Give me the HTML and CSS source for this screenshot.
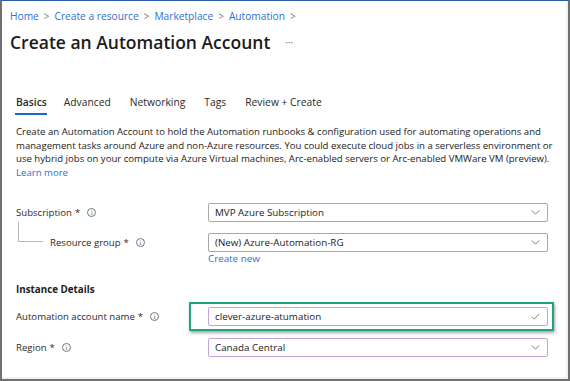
FILE: index.html
```html
<!DOCTYPE html>
<html lang="en">
<head>
<meta charset="utf-8">
<title>Create an Automation Account</title>
<link rel="stylesheet" href="styles.css">
</head>
<body>
<div class="frame">
  <div class="header">
    <nav class="crumbs">
      <a>Home</a><span class="sep">&gt;</span><a>Create a resource</a><span class="sep">&gt;</span><a>Marketplace</a><span class="sep">&gt;</span><a>Automation</a><span class="sep">&gt;</span>
    </nav>
    <div class="title-row">
      <h1 class="title">Create an Automation Account</h1>
      <span class="more">···</span>
    </div>
  </div>
  <div class="content">
    <div class="tabs">
      <span class="tab active">Basics</span>
      <span class="tab">Advanced</span>
      <span class="tab">Networking</span>
      <span class="tab">Tags</span>
      <span class="tab">Review + Create</span>
    </div>
    <p class="desc">Create an Automation Account to hold the Automation runbooks &amp; configuration used for automating operations and management tasks around Azure and non-Azure resources. You could execute cloud jobs in a serverless environment or use hybrid jobs on your compute via Azure Virtual machines, Arc-enabled servers or Arc-enabled VMWare VM (preview).<br><a class="link">Learn more</a></p>

    <div class="form">
      <div class="row r-sub">
        <label class="label">Subscription <span class="req">*</span> <span class="info">i</span></label>
        <div class="field select"><span>MVP Azure Subscription</span><svg class="chev" viewBox="0 0 10 6"><path d="M0.5 0.5 L5 5 L9.5 0.5" fill="none" stroke="#555" stroke-width="0.9"/></svg></div>
      </div>
      <div class="row r-rg">
        <label class="label nested"><span class="tree"></span>Resource group <span class="req">*</span> <span class="info">i</span></label>
        <div class="field-col">
          <div class="field select"><span>(New) Azure-Automation-RG</span><svg class="chev" viewBox="0 0 10 6"><path d="M0.5 0.5 L5 5 L9.5 0.5" fill="none" stroke="#555" stroke-width="0.9"/></svg></div>
          <a class="link create">Create new</a>
        </div>
      </div>
      <h2 class="section">Instance Details</h2>
      <div class="row r-name">
        <label class="label">Automation account name <span class="req">*</span> <span class="info">i</span></label>
        <div class="field input focus"><span>clever-azure-atumation</span><svg class="check" viewBox="0 0 10 8"><path d="M0.8 4.2 L3.6 7 L9.2 1" fill="none" stroke="#9c7d5c" stroke-width="1.1"/></svg>
          <div class="highlight"></div>
        </div>
      </div>
      <div class="row r-region">
        <label class="label">Region <span class="req">*</span> <span class="info">i</span></label>
        <div class="field select focus"><span>Canada Central</span><svg class="chev" viewBox="0 0 10 6"><path d="M0.5 0.5 L5 5 L9.5 0.5" fill="none" stroke="#555" stroke-width="0.9"/></svg></div>
      </div>
    </div>
  </div>
</div>
</body>
</html>
```
FILE: styles.css
```css
* { box-sizing: border-box; }
html, body { margin: 0; padding: 0; background: #fff; }
body { font-family: "Open Sans", "Noto Sans", sans-serif; color: #242424; }

.frame {
  width: 570px;
  height: 381px;
  border-top: 1px solid #2a5caa;
  border-left: 2px solid #707070;
  border-right: 2px solid #707070;
  border-bottom: 2px solid #707070;
  box-shadow: inset -2px -2px 0 #f1f1f1;
  overflow: hidden;
  position: relative;
}

.header { padding: 7px 0 0 8px; }
.crumbs { font-size: 10.2px; line-height: 16px; height: 16px; white-space: nowrap; }
.crumbs a { color: #2f6fd0; }
.crumbs .sep { color: #777; margin: 0 5px; font-size: 10px; }

.title-row { display: flex; align-items: center; margin-top: 5px; height: 26px; }
.title { margin: 0; font-size: 17.5px; font-weight: 600; line-height: 26px; color: #1b1b1b; }
.more { margin-left: 15px; color: #666; font-size: 10px; }

.content { padding: 0 0 0 14px; }

.tabs { display: flex; margin-top: 38px; height: 23px; }
.tab { font-size: 10.3px; line-height: 18px; margin-right: 19px; color: #2a2a2a; height: 23px; position: relative; }
.tab.active { font-weight: 600; margin-right: 17px; }
.tab.active::after {
  content: "";
  position: absolute;
  left: -1px; right: 0;
  bottom: 1px;
  height: 2px;
  background: #1f66c8;
}

.desc { margin: 9px 0 0 0; font-size: 9.6px; line-height: 13.6px; color: #222; width: 545px; }
.link { color: #2f6fd0; }

.form { margin-top: 24px; }
.row { display: grid; grid-template-columns: 192px 340px; align-items: start; }
.label { font-size: 9.6px; line-height: 19px; color: #2a2a2a; display: flex; align-items: center; white-space: nowrap; }
.req { margin-left: 3px; }
.info {
  display: inline-flex; align-items: center; justify-content: center;
  width: 9px; height: 9px; border: 0.8px solid #777; border-radius: 50%;
  font-size: 6.5px; line-height: 1; color: #666; margin-left: 7px; font-family: "DejaVu Serif", serif;
}

.field {
  height: 19px;
  border: 1px solid #a8a8a8;
  border-radius: 2px;
  font-size: 9.8px;
  line-height: 17px;
  padding: 0 7px 0 6px;
  display: flex; align-items: center; justify-content: space-between;
  position: relative;
  color: #222;
}
.field.focus { border-color: #c2a5d8; }
.chev { width: 9px; height: 5px; }
.check { width: 9px; height: 7px; }

.r-rg { margin-top: 11px; }
.label.nested { padding-left: 34px; position: relative; }
.tree {
  position: absolute;
  left: 2px; top: -11px;
  width: 25px; height: 20px;
  border-left: 1px solid #b8b8b8;
  border-bottom: 1px solid #b8b8b8;
}
.create { display: block; font-size: 9.8px; line-height: 14px; margin-top: 0; }

.section { margin: 17px 0 0 0; font-size: 9.8px; font-weight: 700; line-height: 14px; color: #222; }

.r-name { margin-top: 10px; }
.highlight {
  position: absolute;
  left: -20px; right: -7px;
  top: -6px; bottom: -6px;
  border: 2px solid #1ba47f;
  box-shadow: 1px 2px 3px rgba(0,0,0,0.35);
  pointer-events: none;
}
.r-region { margin-top: 12px; }
```
